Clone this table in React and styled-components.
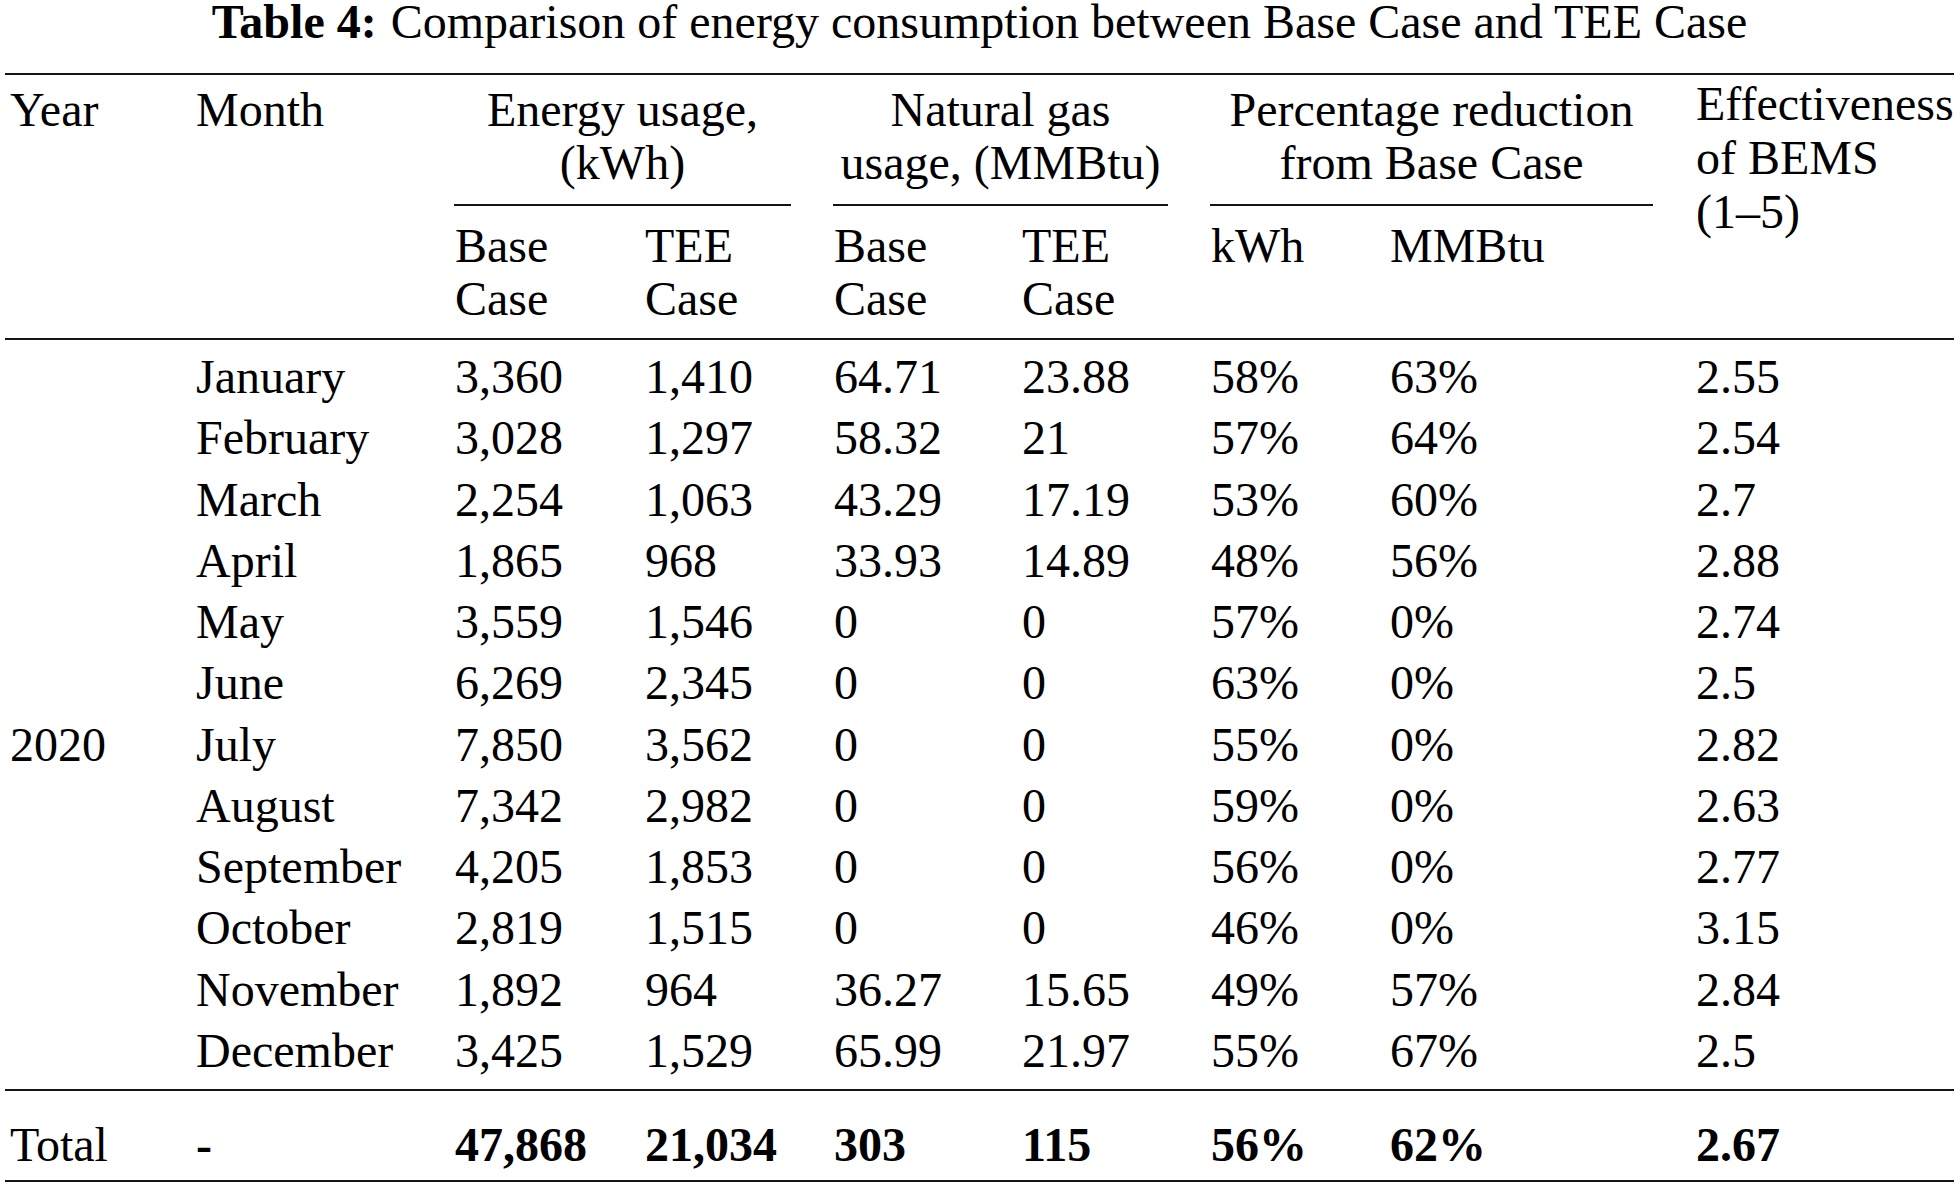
import React from 'react';
import styled, { createGlobalStyle } from 'styled-components';

const GlobalStyle = createGlobalStyle`
	html, body {
		margin: 0;
		padding: 0;
		background: #fff;
	}
	body {
		font-family: 'Liberation Serif', 'Times New Roman', serif;
		color: #000;
	}
`;

const COLUMNS = '190px 259px 190px 189px 188px 189px 179px 306px 259px';

const Page = styled.main`
	width: 1949px;
	padding: 2px 0 0 5px;
	font-size: 48px;
`;

const Caption = styled.h1`
	margin: 0 0 31px 0;
	font-size: 48px;
	font-weight: 400;
	line-height: 40px;
	text-align: center;

	& b {
		font-weight: 700;
		margin-right: 14px;
	}
`;

const Rule = styled.div`
	height: 2px;
	background: #141414;
`;

const Grid = styled.div`
	display: grid;
	grid-template-columns: ${COLUMNS};
	line-height: ${(props) => props.lh || '53px'};
	grid-auto-rows: ${(props) => props.rowHeight || 'auto'};
	padding: ${(props) => props.pad || '0'};
`;

const HeadCell = styled.div`
	grid-column: ${(props) => props.col};
	grid-row: 1 / 3;
	padding-top: ${(props) => props.top || '8px'};
	padding-left: ${(props) => (props.first ? '5px' : '1px')};
	line-height: ${(props) => props.lh || '53px'};
`;

const GroupHead = styled.div`
	grid-column: ${(props) => props.col};
	grid-row: 1;
	margin-right: 42px;
	padding: 8px 0 15px 0;
	text-align: center;
	border-bottom: 2px solid #141414;
`;

const SubHead = styled.div`
	grid-column: ${(props) => props.col};
	grid-row: 2;
	padding: 13px 0 13px 1px;
`;

const Cell = styled.div`
	padding-left: ${(props) => (props.first ? '5px' : '1px')};
	font-weight: ${(props) => (props.bold ? 700 : 400)};
	white-space: nowrap;
`;

const rows = [
	['January', '3,360', '1,410', '64.71', '23.88', '58%', '63%', '2.55'],
	['February', '3,028', '1,297', '58.32', '21', '57%', '64%', '2.54'],
	['March', '2,254', '1,063', '43.29', '17.19', '53%', '60%', '2.7'],
	['April', '1,865', '968', '33.93', '14.89', '48%', '56%', '2.88'],
	['May', '3,559', '1,546', '0', '0', '57%', '0%', '2.74'],
	['June', '6,269', '2,345', '0', '0', '63%', '0%', '2.5'],
	['July', '7,850', '3,562', '0', '0', '55%', '0%', '2.82'],
	['August', '7,342', '2,982', '0', '0', '59%', '0%', '2.63'],
	['September', '4,205', '1,853', '0', '0', '56%', '0%', '2.77'],
	['October', '2,819', '1,515', '0', '0', '46%', '0%', '3.15'],
	['November', '1,892', '964', '36.27', '15.65', '49%', '57%', '2.84'],
	['December', '3,425', '1,529', '65.99', '21.97', '55%', '67%', '2.5'],
];

const totals = ['-', '47,868', '21,034', '303', '115', '56%', '62%', '2.67'];

const App = () => {
	return (
		<Page>
			<GlobalStyle />
			<Caption>
				<b>Table 4:</b>Comparison of energy consumption between Base Case and TEE Case
			</Caption>
			<Rule />
			<Grid>
				<HeadCell col='1' first>
					Year
				</HeadCell>
				<HeadCell col='2'>Month</HeadCell>
				<GroupHead col='3 / 5'>
					Energy usage,
					<br />
					(kWh)
				</GroupHead>
				<GroupHead col='5 / 7'>
					Natural gas
					<br />
					usage, (MMBtu)
				</GroupHead>
				<GroupHead col='7 / 9'>
					Percentage reduction
					<br />
					from Base Case
				</GroupHead>
				<HeadCell col='9' top='2px' lh='54px'>
					Effectiveness
					<br />
					of BEMS
					<br />
					(1–5)
				</HeadCell>
				<SubHead col='3'>
					Base
					<br />
					Case
				</SubHead>
				<SubHead col='4'>
					TEE
					<br />
					Case
				</SubHead>
				<SubHead col='5'>
					Base
					<br />
					Case
				</SubHead>
				<SubHead col='6'>
					TEE
					<br />
					Case
				</SubHead>
				<SubHead col='7'>kWh</SubHead>
				<SubHead col='8'>MMBtu</SubHead>
			</Grid>
			<Rule />
			<Grid lh='61.25px' rowHeight='61.25px' pad='6px 0 8px 0'>
				{rows.map((r, i) => (
					<React.Fragment key={r[0]}>
						<Cell first>{i === 6 ? '2020' : ''}</Cell>
						{r.map((v, j) => (
							<Cell key={j}>{v}</Cell>
						))}
					</React.Fragment>
				))}
			</Grid>
			<Rule />
			<Grid lh='61.25px' rowHeight='61.25px' pad='23px 0 5px 0'>
				<Cell first>Total</Cell>
				{totals.map((v, j) => (
					<Cell key={j} bold>
						{v}
					</Cell>
				))}
			</Grid>
			<Rule />
		</Page>
	);
};

export default App;
